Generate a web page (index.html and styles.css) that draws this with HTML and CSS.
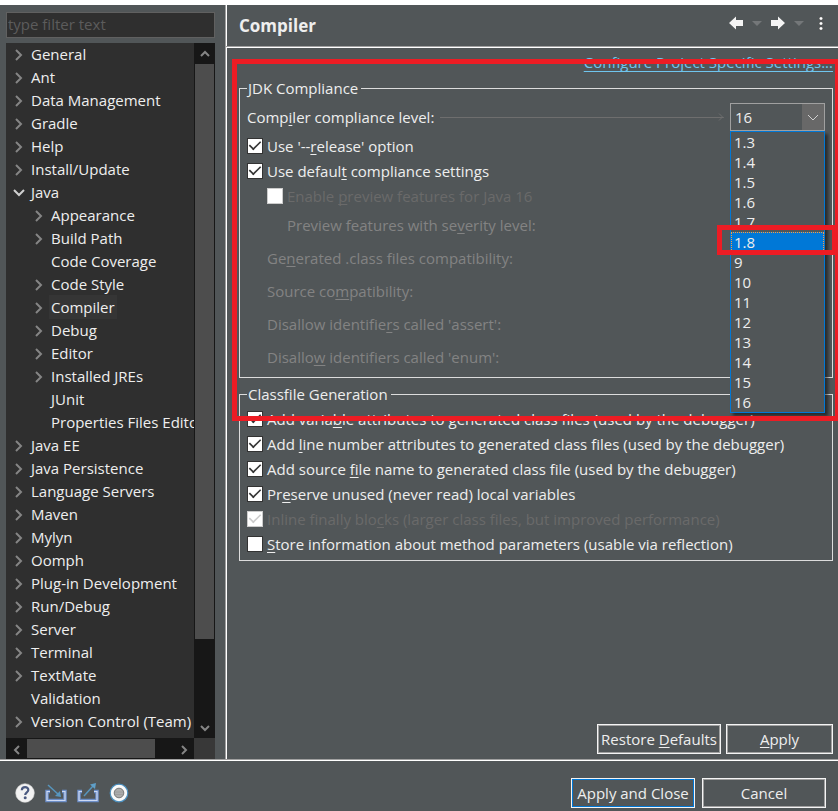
FILE: index.html
```html
<!DOCTYPE html>
<html lang="en">
<head>
    <meta charset="UTF-8">
    <meta name="viewport" content="width=device-width, initial-scale=1.0">
    <title>Preferences</title>
    <link rel="stylesheet" href="styles.css">
</head>
<body>
    <svg class="symbols" aria-hidden="true">
        <symbol id="closed" viewBox="0 0 10 12"><path d="M2 1l5 5-5 5" fill="none" stroke="#858585" stroke-width="2"/></symbol>
        <symbol id="open" viewBox="0 0 12 10"><path d="M1 2l5 5 5-5" fill="none" stroke="#d0d0d0" stroke-width="2"/></symbol>
    </svg>

    <div class="workspace">
        <aside class="sidebar">
            <input class="filter" type="text" placeholder="type filter text" aria-label="Filter">
            <div class="tree-panel">
                <ul class="tree">
                    <li><svg class="arrow"><use href="#closed"/></svg><span>General</span></li>
                    <li><svg class="arrow"><use href="#closed"/></svg><span>Ant</span></li>
                    <li><svg class="arrow"><use href="#closed"/></svg><span>Data Management</span></li>
                    <li><svg class="arrow"><use href="#closed"/></svg><span>Gradle</span></li>
                    <li><svg class="arrow"><use href="#closed"/></svg><span>Help</span></li>
                    <li><svg class="arrow"><use href="#closed"/></svg><span>Install/Update</span></li>
                    <li><svg class="arrow"><use href="#open"/></svg><span>Java</span></li>
                    <li class="child"><svg class="arrow"><use href="#closed"/></svg><span>Appearance</span></li>
                    <li class="child"><svg class="arrow"><use href="#closed"/></svg><span>Build Path</span></li>
                    <li class="child leaf"><span>Code Coverage</span></li>
                    <li class="child"><svg class="arrow"><use href="#closed"/></svg><span>Code Style</span></li>
                    <li class="child"><svg class="arrow"><use href="#closed"/></svg><span class="current">Compiler</span></li>
                    <li class="child"><svg class="arrow"><use href="#closed"/></svg><span>Debug</span></li>
                    <li class="child"><svg class="arrow"><use href="#closed"/></svg><span>Editor</span></li>
                    <li class="child"><svg class="arrow"><use href="#closed"/></svg><span>Installed JREs</span></li>
                    <li class="child leaf"><span>JUnit</span></li>
                    <li class="child leaf"><span>Properties Files Edito</span></li>
                    <li><svg class="arrow"><use href="#closed"/></svg><span>Java EE</span></li>
                    <li><svg class="arrow"><use href="#closed"/></svg><span>Java Persistence</span></li>
                    <li><svg class="arrow"><use href="#closed"/></svg><span>Language Servers</span></li>
                    <li><svg class="arrow"><use href="#closed"/></svg><span>Maven</span></li>
                    <li><svg class="arrow"><use href="#closed"/></svg><span>Mylyn</span></li>
                    <li><svg class="arrow"><use href="#closed"/></svg><span>Oomph</span></li>
                    <li><svg class="arrow"><use href="#closed"/></svg><span>Plug-in Development</span></li>
                    <li><svg class="arrow"><use href="#closed"/></svg><span>Run/Debug</span></li>
                    <li><svg class="arrow"><use href="#closed"/></svg><span>Server</span></li>
                    <li><svg class="arrow"><use href="#closed"/></svg><span>Terminal</span></li>
                    <li><svg class="arrow"><use href="#closed"/></svg><span>TextMate</span></li>
                    <li class="leaf"><span>Validation</span></li>
                    <li><svg class="arrow"><use href="#closed"/></svg><span>Version Control (Team)</span></li>
                </ul>
                <div class="scroll-y">
                    <button class="scroll-button" aria-label="Scroll up"><svg width="12" height="8" viewBox="0 0 12 8"><path d="M2 6l4-4 4 4" fill="none" stroke="#858585" stroke-width="2"/></svg></button>
                    <div class="thumb-y"></div>
                    <div class="track-y"></div>
                    <button class="scroll-button" aria-label="Scroll down"><svg width="12" height="8" viewBox="0 0 12 8"><path d="M2 2l4 4 4-4" fill="none" stroke="#858585" stroke-width="2"/></svg></button>
                </div>
                <div class="scroll-x">
                    <button class="scroll-button" aria-label="Scroll left"><svg width="8" height="12" viewBox="0 0 8 12"><path d="M6 2L2 6l4 4" fill="none" stroke="#858585" stroke-width="2"/></svg></button>
                    <div class="thumb-x"></div>
                    <div class="track-x"></div>
                    <button class="scroll-button" aria-label="Scroll right"><svg width="8" height="12" viewBox="0 0 8 12"><path d="M2 2l4 4-4 4" fill="none" stroke="#858585" stroke-width="2"/></svg></button>
                </div>
                <div class="corner"></div>
            </div>
        </aside>

        <main class="page">
            <header class="page-header">
                <h1>Compiler</h1>
                <div class="history">
                    <button aria-label="Back"><svg width="16" height="14" viewBox="0 0 16 14"><path d="M1 7l7-6.500v3.500h7v6H8v3.500z" fill="#f4f4f4"/></svg></button>
                    <button aria-label="Back history"><svg width="10" height="5" viewBox="0 0 10 5"><path d="M0 0h10L5 5z" fill="#747779"/></svg></button>
                    <button aria-label="Forward"><svg width="16" height="14" viewBox="0 0 16 14"><path d="M15 7L8 .5V4H1v6h7v3.500z" fill="#f4f4f4"/></svg></button>
                    <button aria-label="Forward history"><svg width="10" height="5" viewBox="0 0 10 5"><path d="M0 0h10L5 5z" fill="#747779"/></svg></button>
                    <button class="menu" aria-label="Menu"><svg width="6" height="15" viewBox="0 0 6 15"><g fill="#fff" stroke="#3a3a3a" stroke-width=".5"><circle cx="3" cy="2.500" r="1.800"/><circle cx="3" cy="7.500" r="1.800"/><circle cx="3" cy="12.500" r="1.800"/></g></svg></button>
                </div>
            </header>

            <div class="page-body">
                <div class="link-row"><a href="#">Configure Project Specific Settings...</a></div>

                <fieldset class="group">
                    <legend>JDK Compliance</legend>
                    <div class="level-row">
                        <label for="level">Comp<u>i</u>ler compliance level:</label>
                        <span class="leader"><svg width="6" height="8" viewBox="0 0 6 8"><path d="M1 .5L4.500 4 1 7.500" fill="none" stroke="#6e6e6e"/></svg></span>
                        <div class="combo">
                            <select id="level">
                                <option>16</option>
                            </select>
                            <svg class="combo-arrow" width="22" height="26" viewBox="0 0 22 26"><path d="M6 11l5 5 5-5" fill="none" stroke="#d0d0d0"/></svg>
                            <ul class="options" role="listbox" aria-label="Compliance levels">
                                <li role="option">1.3</li>
                                <li role="option">1.4</li>
                                <li role="option">1.5</li>
                                <li role="option">1.6</li>
                                <li role="option">1.7</li>
                                <li role="option" class="selected" aria-selected="true">1.8</li>
                                <li role="option">9</li>
                                <li role="option">10</li>
                                <li role="option">11</li>
                                <li role="option">12</li>
                                <li role="option">13</li>
                                <li role="option">14</li>
                                <li role="option">15</li>
                                <li role="option">16</li>
                            </ul>
                            <div class="mark mark-option"></div>
                        </div>
                    </div>
                    <label class="check"><input type="checkbox" checked><span>Use '--<u>r</u>elease' option</span></label>
                    <label class="check"><input type="checkbox" checked><span>Use defaul<u>t</u> compliance settings</span></label>
                    <label class="check nested faint"><input type="checkbox" disabled><span>Enable <u>p</u>review features for Java 16</span></label>
                    <p class="setting deeper">Preview features with se<u>v</u>erity level:</p>
                    <p class="setting">Ge<u>n</u>erated .class files compatibility:</p>
                    <p class="setting">Source co<u>m</u>patibility:</p>
                    <p class="setting">Disallow identifie<u>r</u>s called 'assert':</p>
                    <p class="setting">Disallo<u>w</u> identifiers called 'enum':</p>
                </fieldset>

                <fieldset class="group">
                    <legend>Classfile Generation</legend>
                    <div class="checks">
                        <label class="check"><input type="checkbox" checked><span>Add varia<u>b</u>le attributes to generated class files (used by the debugger)</span></label>
                        <label class="check"><input type="checkbox" checked><span>Add <u>l</u>ine number attributes to generated class files (used by the debugger)</span></label>
                        <label class="check"><input type="checkbox" checked><span>Add source <u>f</u>ile name to generated class file (used by the debugger)</span></label>
                        <label class="check"><input type="checkbox" checked><span>Pr<u>e</u>serve unused (never read) local variables</span></label>
                        <label class="check faint"><input type="checkbox" checked disabled><span>Inline finally blo<u>c</u>ks (larger class files, but improved performance)</span></label>
                        <label class="check"><input type="checkbox"><span><u>S</u>tore information about method parameters (usable via reflection)</span></label>
                    </div>
                </fieldset>

                <div class="page-buttons">
                    <button class="button restore">Restore <u>D</u>efaults</button>
                    <button class="button apply"><u>A</u>pply</button>
                </div>
                <div class="mark mark-groups"></div>
            </div>
        </main>
    </div>

    <footer class="footer">
        <div class="tools">
            <button aria-label="Help"><svg width="20" height="20" viewBox="0 0 20 20"><circle cx="10" cy="10" r="9.300" fill="#f2f2f2" stroke="#d8d8d8" stroke-width=".6"/><path d="M6.800 7.200C7 3.200 13.400 3.300 13.300 7c0 2.300-3.100 2.400-3.100 5" fill="none" stroke="#4b5a80" stroke-width="2.200"/><circle cx="10.200" cy="14.800" r="1.500" fill="#4b5a80"/></svg></button>
            <button aria-label="Import"><svg width="22" height="20" viewBox="0 0 22 20"><path d="M5 8.500H2v9h18v-9h-3" fill="none" stroke="#6d8fc8" stroke-width="3.500"/><path d="M5 8.500H2v9h18v-9h-3" fill="none" stroke="#cdd9f3" stroke-width="1.200"/><path d="M3 2l11 10" stroke="#5795bd" stroke-width="1.500"/><path d="M16 14l-6-1 5-5z" fill="#5795bd"/></svg></button>
            <button aria-label="Export"><svg width="22" height="20" viewBox="0 0 22 20"><path d="M5 8.500H2v9h18v-9h-3" fill="none" stroke="#6d8fc8" stroke-width="3.500"/><path d="M5 8.500H2v9h18v-9h-3" fill="none" stroke="#cdd9f3" stroke-width="1.200"/><path d="M7 13l9-10" stroke="#5795bd" stroke-width="1.500"/><path d="M19 0l-1 6-5-4.500z" fill="#5f9fc8"/></svg></button>
            <button aria-label="Record"><svg width="20" height="20" viewBox="0 0 20 20"><circle cx="10" cy="10" r="8.800" fill="#fafafa" stroke="#4c90bf" stroke-width="1.200"/><circle cx="10" cy="10" r="4.800" fill="#ababab" stroke="#777"/><path d="M6 9h8M6 11.500h8" stroke="#999" stroke-width=".8"/></svg></button>
        </div>
        <button class="button default">Apply and Close</button>
        <button class="button">Cancel</button>
    </footer>
</body>
</html>
```
FILE: styles.css
```css
* {
    box-sizing: border-box;
}

body {
    margin: 0;
    min-height: 100vh;
    display: flex;
    flex-direction: column;
    border-top: 5px solid #fff;
    background: #515658;
    color: #eee;
    font-family: "Open Sans", "Noto Sans", sans-serif;
    font-size: 15px;
    line-height: 20px;
    overflow: hidden;
}

button,
input,
select {
    font: inherit;
    color: inherit;
}

button {
    padding: 0;
    border: none;
    background: none;
}

u {
    text-decoration: underline;
    text-underline-offset: 2px;
    text-decoration-skip-ink: none;
}

.symbols {
    display: none;
}

.workspace {
    flex: 1;
    display: grid;
    grid-template-columns: 225px minmax(0, 1fr);
}

/* sidebar */

.sidebar {
    display: flex;
    flex-direction: column;
    gap: 5px;
    padding: 7px 10px 0 6px;
}

.filter {
    width: 100%;
    height: 26px;
    padding: 0 1px 2px;
    border: 1px solid #606060;
    border-radius: 0;
    background: #2f2f2f;
}

.filter::placeholder {
    color: #5c5c5c;
    opacity: 1;
}

.tree-panel {
    flex: 1;
    display: grid;
    grid-template-columns: minmax(0, 1fr) 21px;
    grid-template-rows: 1fr 21px;
    background: #2f2f2f;
}

.tree {
    margin: 0;
    padding: 0 0 5px;
    list-style: none;
    overflow: hidden;
}

.tree li {
    display: flex;
    align-items: center;
    height: 23px;
    padding-left: 7px;
    white-space: nowrap;
}

.tree .child {
    padding-left: 27px;
}

.tree .leaf {
    padding-left: 25px;
}

.tree .child.leaf {
    padding-left: 45px;
}

.tree span {
    margin-bottom: 2px;
}

.arrow {
    flex: none;
    width: 12px;
    height: 12px;
    margin-right: 6px;
}

.current {
    background: #353535;
    box-shadow: 0 0 0 2px #353535;
}

.scroll-y,
.scroll-x {
    display: flex;
    background: #171717;
}

.scroll-y {
    flex-direction: column;
    align-items: center;
}

.scroll-x {
    padding: 1px 0;
}

.scroll-button {
    flex: none;
    width: 21px;
    height: 21px;
    display: flex;
    align-items: center;
    justify-content: center;
}

.thumb-y {
    flex: 88;
    width: 19px;
    background: #4d4d4d;
}

.track-y {
    flex: 12;
}

.thumb-x {
    flex: 88;
    background: #4d4d4d;
}

.track-x {
    flex: 12;
}

.corner {
    background: #383838;
}

/* preference page */

.page {
    display: flex;
    flex-direction: column;
    border-left: 1px solid #a0a0a0;
    box-shadow: inset 1px 0 #fff;
}

.page-header {
    display: flex;
    align-items: center;
    justify-content: space-between;
    height: 43px;
    padding: 0 14px 0 13px;
    border-bottom: 1px solid #fff;
    box-shadow: inset 0 -1px #a0a0a0;
}

h1 {
    margin: 0;
    font-size: 17px;
    line-height: 24px;
}

.history {
    display: flex;
    align-items: center;
    gap: 8px;
    padding-bottom: 6px;
}

.history button {
    display: flex;
}

.history .menu {
    margin-left: 6px;
}

.page-body {
    flex: 1;
    position: relative;
    display: flex;
    flex-direction: column;
    gap: 6px;
    padding: 4px 5px 5px 13px;
}

.link-row {
    text-align: right;
}

.link-row a {
    color: #6fc5ee;
    text-underline-offset: 3px;
    text-decoration-skip-ink: none;
}

.group {
    margin: 0;
    padding: 0 7px 3px;
    border: 1px solid #dcdcdc;
    min-width: 0;
}

.group legend {
    padding: 0 3px 0 1px;
}

.level-row {
    display: flex;
    align-items: center;
    gap: 6px;
    padding: 5px 0 2px;
}

.leader {
    flex: 1;
    display: flex;
    justify-content: flex-end;
    background: linear-gradient(#6e6e6e, #6e6e6e) center / 100% 1px no-repeat;
}

.combo {
    position: relative;
    width: 95px;
    height: 28px;
}

.combo select {
    display: block;
    width: 100%;
    height: 28px;
    padding: 0 24px 0 4px;
    border: 1px solid #a0a0a0;
    border-radius: 0;
    appearance: none;
    background: #515658;
}

.combo-arrow {
    position: absolute;
    top: 1px;
    right: 1px;
    background: #686868;
    pointer-events: none;
}

.options {
    position: absolute;
    z-index: 1;
    top: 28px;
    left: 0;
    right: 0;
    margin: 0;
    padding: 0;
    border: 1px solid #0078d7;
    background: #515658;
    box-shadow: 3px 3px 3px rgba(0, 0, 0, 0.5);
    list-style: none;
}

.options li {
    height: 20px;
    padding-left: 3px;
}

.options .selected {
    outline: 1px dotted #ff9c3a;
    outline-offset: -1px;
    background: #0078d7;
}

.check {
    display: flex;
    align-items: center;
    gap: 4px;
    height: 25px;
    white-space: nowrap;
}

.check input {
    flex: none;
    width: 16px;
    height: 16px;
    margin: 0;
    border: 1px solid #333;
    appearance: none;
    background: #fff;
}

.check input:checked {
    display: grid;
    place-items: center;
}

.check input:checked::before {
    content: "";
    width: 12px;
    height: 6px;
    border: solid #333;
    border-width: 0 0 2px 2px;
    transform: translateY(-2px) rotate(-45deg) scale(0.8);
}

.check input:disabled {
    border-color: #ccc;
}

.check input:disabled::before {
    border-color: #ccc;
}

.faint {
    color: #6a6a6a;
}

.nested {
    padding-left: 20px;
}

.checks {
    padding: 2px 0 1px;
}

.setting {
    margin: 0;
    padding-left: 20px;
    color: #838383;
    line-height: 33px;
}

.deeper {
    margin-top: 1px;
    padding-left: 40px;
}

.page-buttons {
    display: flex;
    justify-content: flex-end;
    gap: 5px;
    margin-top: auto;
}

.button {
    width: 124px;
    height: 30px;
    border: 1px solid #f4f4f4;
    box-shadow: inset 0 0 0 1px #a0a0a0;
    white-space: nowrap;
}

.button.apply {
    width: 107px;
}

.button.default {
    box-shadow: inset 0 0 0 1px #0078d7;
}

/* red highlight frames */

.mark {
    position: absolute;
    z-index: 2;
    border: 5px solid #ed1c24;
    pointer-events: none;
}

.mark-groups {
    top: 11px;
    left: 6px;
    right: -2px;
    height: 362px;
}

.mark-option {
    top: 122px;
    left: -13px;
    right: -12px;
    height: 30px;
}

/* dialog footer */

.footer {
    display: flex;
    align-items: center;
    gap: 7px;
    height: 52px;
    padding: 14px 12px 0 15px;
    border-top: 1px solid #a0a0a0;
    box-shadow: inset 0 1px #fff;
}

.tools {
    display: flex;
    gap: 10px;
    margin-right: auto;
}

.tools button {
    display: flex;
}
```
